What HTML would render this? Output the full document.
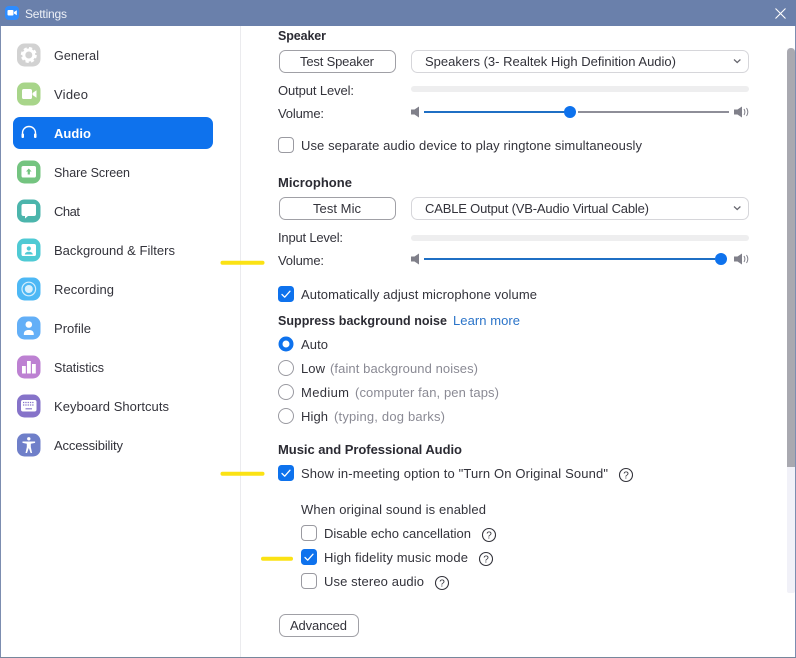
<!DOCTYPE html>
<html><head><meta charset="utf-8"><title>Settings</title>
<style>
html,body{margin:0;padding:0;background:#fff;width:796px;height:658px;overflow:hidden}
svg{display:block;font-family:"Liberation Sans",sans-serif;font-size:13px}
text{fill:#33333b}
.s{font-size:12.5px}
.b{font-weight:700;fill:#2b2b33}
.g{fill:#8a8a94}
.btn{fill:#fff;stroke:#a0a0a6;stroke-width:1}
.sel{fill:#fff;stroke:#d6d6da;stroke-width:1}
.cb{fill:#fff;stroke:#9a9aa1;stroke-width:1}
.cbon{fill:#0e72ed}
.chk{fill:none;stroke:#fff;stroke-width:1.300;stroke-linecap:round;stroke-linejoin:round}
.ra{fill:#fff;stroke:#9a9aa1;stroke-width:1}
.h{fill:none;stroke:#33333b;stroke-width:1.100}
.q{font-size:10px}
.y{stroke:#fbe214;stroke-width:4;stroke-linecap:round}
.chev{fill:none;stroke:#66666e;stroke-width:1.200}
</style></head><body>
<svg width="796" height="658" viewBox="0 0 796 658" xmlns="http://www.w3.org/2000/svg">
<rect width="796" height="658" fill="#fff"/>
<rect x="0" y="0" width="796" height="26" fill="#6a80ab"/>
<rect x="0" y="26" width="1" height="632" fill="#7c8db0"/>
<rect x="795" y="26" width="1" height="632" fill="#7c8db0"/>
<rect x="0" y="657" width="796" height="1" fill="#76879c"/>
<rect x="5" y="6" width="14" height="14" rx="4" fill="#2d8cff"/>
<rect x="7.500" y="10" width="6" height="5.500" rx="1" fill="#fff"/>
<path d="M14 12l2.800-1.800v5L14 13.500z" fill="#fff"/>
<text x="25" y="18" textLength="42" style="fill:#eef1f7;font-size:12px">Settings</text>
<path d="M775.500 8.500l10 10M785.500 8.500l-10 10" stroke="#fff" stroke-width="1.100" fill="none"/>

<rect x="240" y="26" width="1" height="631" fill="#ebebee"/>

<!-- sidebar -->
<rect x="17" y="43.500" width="23.500" height="23" rx="7.500" fill="#d2d2d2"/>
<circle cx="28.800" cy="55" r="5" fill="none" stroke="#fff" stroke-width="3"/>
<circle cx="28.800" cy="55" r="7" fill="none" stroke="#fff" stroke-width="2" stroke-dasharray="3.200 2.300"/>
<text x="54" y="60" textLength="45" class="s">General</text>

<rect x="17" y="82.500" width="23.500" height="23" rx="7.500" fill="#a8d58a"/>
<rect x="22" y="89" width="10" height="10" rx="1.800" fill="#fff"/>
<path d="M32.500 93l4-2.800v7.600l-4-2.800z" fill="#fff"/>
<text x="54" y="99" textLength="34">Video</text>

<rect x="13" y="117" width="200" height="32" rx="7" fill="#0e72ed"/>
<path d="M22.500 136v-3a6.500 6.500 0 0 1 13 0v3" fill="none" stroke="#fff" stroke-width="1.400"/>
<rect x="21.500" y="133.500" width="2.500" height="4.500" rx="1" fill="#fff"/>
<rect x="34" y="133.500" width="2.500" height="4.500" rx="1" fill="#fff"/>
<text x="54" y="138" textLength="37" class="b" style="fill:#fff">Audio</text>

<rect x="17" y="160.500" width="23.500" height="23" rx="7.500" fill="#74c480"/>
<rect x="21.500" y="166" width="14.500" height="11.500" rx="1.800" fill="#fff"/>
<path d="M28.800 168.500l2.800 3h-1.700v3h-2.200v-3H26z" fill="#74c480"/>
<text x="54" y="177" textLength="76" class="s">Share Screen</text>

<rect x="17" y="199.500" width="23.500" height="23" rx="7.500" fill="#4cb5ac"/>
<path d="M23.500 204h10.500a2 2 0 0 1 2 2v8a2 2 0 0 1-2 2h-6l-3 2.500v-2.500h-1.500a2 2 0 0 1-2-2v-8a2 2 0 0 1 2-2z" fill="#fff"/>
<text x="54" y="216" textLength="26">Chat</text>

<rect x="17" y="238.500" width="23.500" height="23" rx="7.500" fill="#4fcad4"/>
<rect x="21.500" y="244" width="14.500" height="12" rx="1.800" fill="#fff"/>
<circle cx="28.800" cy="248.500" r="2.100" fill="#4fcad4"/>
<path d="M24.800 254.500c.3-2 2-2.700 4-2.700s3.700.7 4 2.700z" fill="#4fcad4"/>
<text x="54" y="255" textLength="121">Background &amp; Filters</text>

<rect x="17" y="277.500" width="23.500" height="23" rx="7.500" fill="#4db8f5"/>
<circle cx="28.800" cy="289" r="6.800" fill="none" stroke="#d4eefc" stroke-width="1.200"/>
<circle cx="28.800" cy="289" r="4" fill="#d8f0fd"/>
<text x="54" y="294" textLength="60">Recording</text>

<rect x="17" y="316.500" width="23.500" height="23" rx="7.500" fill="#63aff7"/>
<circle cx="28.800" cy="324.500" r="3.300" fill="#fff"/>
<path d="M23.800 334.500c0-3.500 2-4.500 5-4.500s5 1 5 4.500c0 .3-.2.500-.5.500h-9c-.3 0-.5-.2-.5-.5z" fill="#fff"/>
<text x="54" y="333" textLength="37">Profile</text>

<rect x="17" y="355.500" width="23.500" height="23" rx="7.500" fill="#bd81d2"/>
<rect x="22" y="366" width="3.800" height="7.500" fill="#fff"/>
<rect x="27" y="361" width="3.800" height="12.500" fill="#fff"/>
<rect x="32" y="364" width="3.800" height="9.500" fill="#fff"/>
<text x="54" y="372" textLength="50" class="s">Statistics</text>

<rect x="17" y="394.500" width="23.500" height="23" rx="7.500" fill="#8673c9"/>
<rect x="21" y="400" width="15.500" height="11.500" rx="2" fill="#fff"/>
<path d="M23 402.500h11.500M23 405h11.500" stroke="#8673c9" stroke-width="1.200" stroke-dasharray="1.300 1"/>
<path d="M25.500 408.800h6.500" stroke="#8673c9" stroke-width="1.100"/>
<text x="54" y="411" textLength="115">Keyboard Shortcuts</text>

<rect x="17" y="433.500" width="23.500" height="23" rx="7.500" fill="#6f7fc9"/>
<circle cx="28.800" cy="438.800" r="1.700" fill="#fff"/>
<path d="M22.500 441.500h12.600v1.400l-4.300.8v3.300l1.300 6h-1.500l-1.800-5-1.800 5h-1.500l1.300-6v-3.300l-4.300-.8z" fill="#fff"/>
<text x="54" y="450" textLength="69">Accessibility</text>

<!-- scrollbar -->
<rect x="787" y="48" width="8" height="545" rx="2" fill="#f1f1f8"/>
<path d="M787 467V52a3.500 3.500 0 0 1 8 0V467z" fill="#a9a9b0"/>

<!-- speaker -->
<text x="278" y="40" textLength="48" class="b s">Speaker</text>
<rect class="btn" x="279.500" y="50.500" width="116" height="22" rx="6"/>
<text x="300" y="66" textLength="74">Test Speaker</text>
<rect class="sel" x="411.500" y="50.500" width="337" height="22" rx="6"/>
<text x="425" y="66" textLength="251">Speakers (3- Realtek High Definition Audio)</text>
<path class="chev" d="M734 59.500l3.200 3 3.200-3"/>
<text x="278" y="95" textLength="76">Output Level:</text>
<rect x="411" y="86" width="338" height="6" rx="3" fill="#eeeeef"/>
<text x="278" y="118" textLength="46">Volume:</text>
<path d="M411 109.500h3.500l4.500-3v11l-4.500-3H411z" fill="#80808a"/>
<rect x="424" y="111" width="146" height="2" fill="#1f6fc4"/>
<rect x="578" y="111" width="151" height="2" fill="#8e8e98"/>
<circle cx="570" cy="112" r="6" fill="#0e72ed"/>
<path d="M734 109.500h3.500l4.500-3v11l-4.500-3H734z" fill="#80808a"/>
<path d="M744 109c1.200 2 1.200 4 0 6M746.500 108c1.800 2.700 1.800 5.300 0 8" fill="none" stroke="#80808a" stroke-width="1"/>
<rect class="cb" x="278.500" y="137.500" width="15" height="15" rx="3.500"/>
<text x="301" y="150" textLength="341">Use separate audio device to play ringtone simultaneously</text>

<!-- mic -->
<text x="278" y="187" textLength="74" class="b">Microphone</text>
<rect class="btn" x="279.500" y="197.500" width="116" height="22" rx="6"/>
<text x="313" y="213" textLength="48">Test Mic</text>
<rect class="sel" x="411.500" y="197.500" width="337" height="22" rx="6"/>
<text x="425" y="213" textLength="224">CABLE Output (VB-Audio Virtual Cable)</text>
<path class="chev" d="M734 206.500l3.200 3 3.200-3"/>
<text x="278" y="242" textLength="65">Input Level:</text>
<rect x="411" y="235" width="338" height="6" rx="3" fill="#eeeeef"/>
<text x="278" y="265" textLength="46">Volume:</text>
<path d="M411 256.500h3.500l4.500-3v11l-4.500-3H411z" fill="#80808a"/>
<rect x="424" y="258" width="291" height="2" fill="#1f6fc4"/>
<circle cx="721" cy="259" r="6" fill="#0e72ed"/>
<path d="M734 256.500h3.500l4.500-3v11l-4.500-3H734z" fill="#80808a"/>
<path d="M744 256c1.200 2 1.200 4 0 6M746.500 255c1.800 2.700 1.800 5.300 0 8" fill="none" stroke="#80808a" stroke-width="1"/>

<rect class="cbon" x="278" y="286" width="16" height="16" rx="3.500"/>
<path class="chk" d="M282 294.500l2.700 2.700 5.300-6"/>
<text x="301" y="299" textLength="236">Automatically adjust microphone volume</text>

<text x="278" y="325" textLength="169" class="b s">Suppress background noise</text>
<text x="453" y="325" textLength="67" style="fill:#2b74c9">Learn more</text>

<circle cx="286" cy="344" r="5.500" fill="#fff" stroke="#0e72ed" stroke-width="4"/>
<text x="301" y="349" textLength="27">Auto</text>
<circle class="ra" cx="286" cy="368" r="7.500"/>
<text x="301" y="373" textLength="24">Low</text>
<text x="330" y="373" textLength="148" class="g">(faint background noises)</text>
<circle class="ra" cx="286" cy="392" r="7.500"/>
<text x="301" y="397" textLength="48">Medium</text>
<text x="355" y="397" textLength="144" class="g">(computer fan, pen taps)</text>
<circle class="ra" cx="286" cy="416" r="7.500"/>
<text x="301" y="421" textLength="27">High</text>
<text x="334" y="421" textLength="111" class="g">(typing, dog barks)</text>

<text x="278" y="454" textLength="184" class="b">Music and Professional Audio</text>
<rect class="cbon" x="278" y="465" width="16" height="16" rx="3.500"/>
<path class="chk" d="M282 473.500l2.700 2.700 5.300-6"/>
<text x="301" y="478" textLength="307">Show in-meeting option to "Turn On Original Sound"</text>
<circle class="h" cx="626" cy="475" r="6.500"/>
<text x="626" y="478.500" text-anchor="middle" class="q">?</text>

<text x="301" y="514" textLength="185">When original sound is enabled</text>
<rect class="cb" x="301.500" y="525.500" width="15" height="15" rx="3.500"/>
<text x="324" y="538" textLength="147">Disable echo cancellation</text>
<circle class="h" cx="489" cy="535" r="6.500"/>
<text x="489" y="538.500" text-anchor="middle" class="q">?</text>

<rect class="cbon" x="301" y="549" width="16" height="16" rx="3.500"/>
<path class="chk" d="M305 557.500l2.700 2.700 5.300-6"/>
<text x="324" y="562" textLength="144">High fidelity music mode</text>
<circle class="h" cx="486" cy="559" r="6.500"/>
<text x="486" y="562.500" text-anchor="middle" class="q">?</text>

<rect class="cb" x="301.500" y="573.500" width="15" height="15" rx="3.500"/>
<text x="324" y="586" textLength="100">Use stereo audio</text>
<circle class="h" cx="442" cy="583" r="6.500"/>
<text x="442" y="586.500" text-anchor="middle" class="q">?</text>

<rect class="btn" x="279.500" y="614.500" width="79" height="22" rx="6"/>
<text x="290" y="630" textLength="57">Advanced</text>

<!-- yellow marks -->
<path class="y" d="M222.500 262.700h40"/>
<path class="y" d="M222.500 473.800h40"/>
<path class="y" d="M263 558.800h28"/>
</svg>
</body></html>
